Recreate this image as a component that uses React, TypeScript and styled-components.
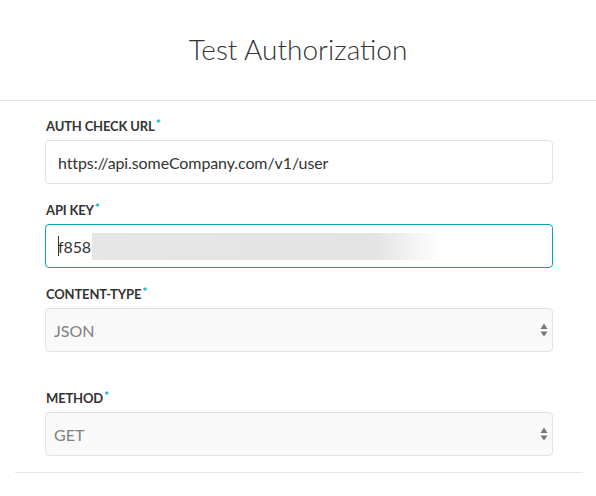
import React from "react";
import styled, { createGlobalStyle } from "styled-components";

const GlobalStyle = createGlobalStyle`
  html, body { margin: 0; padding: 0; background: #fff; }
  body { font-family: Lato, "Open Sans", sans-serif; color: #333; }
  * { box-sizing: border-box; }
`;

const Page = styled.div`
  width: 596px;
  min-height: 496px;
  background: #fff;
`;

const Header = styled.header`
  height: 101px;
  border-bottom: 1px solid #e6e6e6;
  display: flex;
  align-items: center;
  justify-content: center;
`;

const Title = styled.h1`
  margin: 0;
  font-family: Lato, sans-serif;
  font-weight: 300;
  font-size: 28px;
  color: #333;
  padding-bottom: 2px;
`;

const Form = styled.form`
  display: flex;
  flex-direction: column;
  padding: 17px 43px 0 45px;
`;

const Group = styled.div<{ $extra?: boolean }>`
  display: flex;
  flex-direction: column;
  margin-bottom: ${(p) => (p.$extra ? "38px" : "18px")};
  &:last-child { margin-bottom: 16px; }
`;

const Label = styled.label`
  display: block;
  height: 16px;
  font-family: Lato, sans-serif;
  font-weight: 700;
  font-size: 13px;
  line-height: 16px;
  letter-spacing: -0.15px;
  color: #333;
  text-transform: uppercase;
  margin-bottom: 6px;
  padding-left: 1px;
  white-space: nowrap;
`;

const Required = styled.span`
  position: relative;
  top: -3px;
  color: #0fb3bb;
  margin-left: 1px;
  font-size: 12px;
  font-weight: 900;
  line-height: 0;
`;

const Box = styled.div<{ $focused?: boolean; $select?: boolean }>`
  position: relative;
  height: 44px;
  border: 1px solid ${(p) => (p.$focused ? "#09a6ab" : "#e2e2e2")};
  border-radius: 4px;
  background: ${(p) => (p.$select ? "#f9f9f9" : "#fff")};
  display: flex;
  align-items: center;
  padding: 0 ${(p) => (p.$select ? "8px" : "12px")};
  font-family: Lato, sans-serif;
  font-size: 16px;
  letter-spacing: ${(p) => (p.$select ? "0" : "-0.1px")};
  color: ${(p) => (p.$select ? "#808080" : "#333")};
  white-space: nowrap;
`;

const Caret = styled.span`
  display: inline-block;
  width: 1px;
  height: 20px;
  background: #333;
  margin-right: -1px;
  position: relative;
  z-index: 1;
`;

const Redacted = styled.span`
  display: inline-block;
  width: 351px;
  height: 27px;
  margin-left: 1px;
  background: linear-gradient(
    to right,
    #e6e6e6 0%,
    #e3e3e3 80%,
    #f4f4f4 92%,
    rgba(255, 255, 255, 0) 100%
  );
`;

const Arrows = styled.svg`
  position: absolute;
  right: 4px;
  top: 50%;
  transform: translateY(-50%);
`;

const Divider = styled.hr`
  margin: 0 13px 0 15px;
  border: 0;
  border-top: 1px solid #e6e6e6;
`;

const SelectArrows = () => (
  <Arrows width="8" height="14" viewBox="0 0 8 14">
    <path d="M4 0.5 L7.5 6 L0.5 6 Z" fill="#777" />
    <path d="M0.5 8.5 L7.5 8.5 L4 13.5 Z" fill="#777" />
  </Arrows>
);

export default function App() {
  return (
    <Page>
      <GlobalStyle />
      <Header>
        <Title>Test Authorization</Title>
      </Header>
      <Form onSubmit={(e) => e.preventDefault()}>
        <Group>
          <Label>
            Auth Check URL<Required>*</Required>
          </Label>
          <Box>https://api.someCompany.com/v1/user</Box>
        </Group>
        <Group>
          <Label>
            API Key<Required>*</Required>
          </Label>
          <Box $focused>
            <Caret />
            f858
            <Redacted />
          </Box>
        </Group>
        <Group $extra>
          <Label>
            Content-Type<Required>*</Required>
          </Label>
          <Box $select>
            JSON
            <SelectArrows />
          </Box>
        </Group>
        <Group>
          <Label>
            Method<Required>*</Required>
          </Label>
          <Box $select>
            GET
            <SelectArrows />
          </Box>
        </Group>
      </Form>
      <Divider />
    </Page>
  );
}
